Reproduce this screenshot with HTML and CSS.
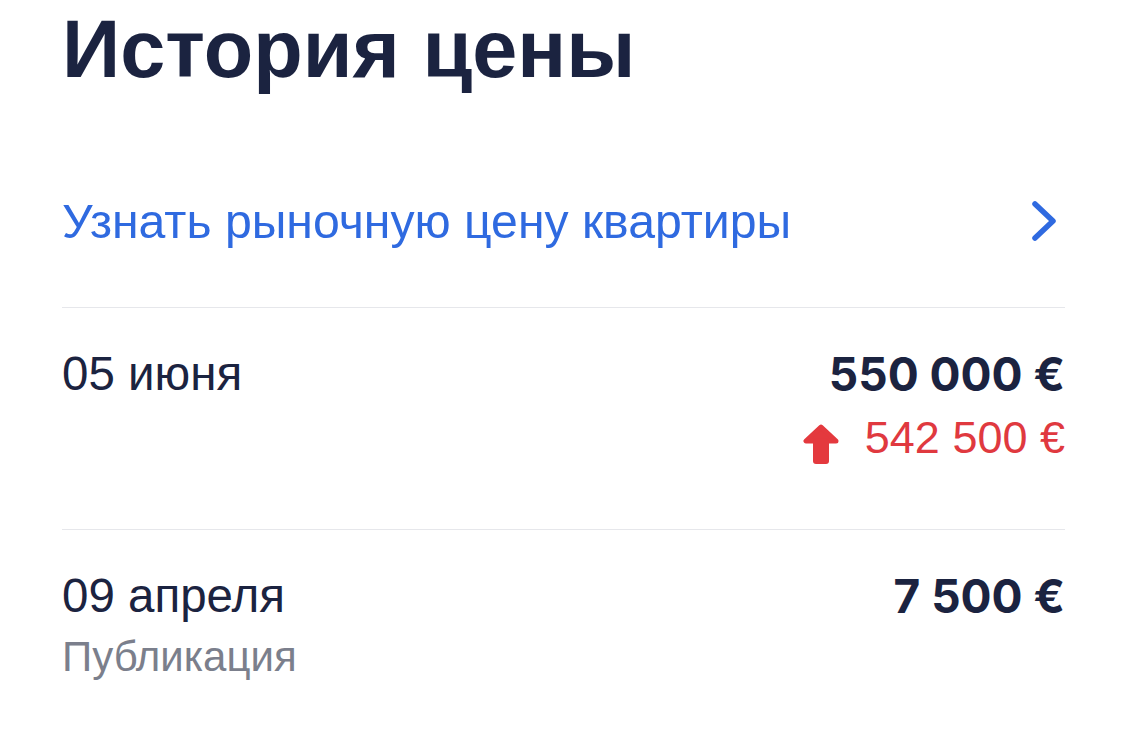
FILE: index.html
```html
<!DOCTYPE html>
<html lang="ru">
<head>
    <meta charset="UTF-8">
    <meta name="viewport" content="width=device-width, initial-scale=1.0">
    <title>История цены</title>
    <link rel="stylesheet" href="styles.css">
</head>
<body>

<div class="container">
    <h1 class="title">История цены</h1>

    <a class="market-link" href="#">
        <span>Узнать рыночную цену квартиры</span>
        <svg class="chevron" width="30" height="44" viewBox="0 0 30 44">
            <path d="M5 5 L23 22 L5 39" fill="none" stroke="#2f6ae0" stroke-width="5.5" stroke-linecap="round" stroke-linejoin="round"/>
        </svg>
    </a>

    <div class="history-row">
        <div class="date-col">
            <div class="date">05 июня</div>
        </div>
        <div class="price-col">
            <div class="price">550 000 €</div>
            <div class="old-price">
                <svg class="arrow" width="36" height="40" viewBox="0 0 36 40">
                    <path d="M18 3 L3 17 L33 17 Z" fill="#e4393e" stroke="#e4393e" stroke-width="5" stroke-linejoin="round"/>
                    <rect x="10" y="15" width="16" height="25" rx="3" fill="#e4393e"/>
                </svg>
                <span>542 500 €</span>
            </div>
        </div>
    </div>

    <div class="history-row last">
        <div class="date-col">
            <div class="date">09 апреля</div>
            <div class="note">Публикация</div>
        </div>
        <div class="price-col">
            <div class="price">7 500 €</div>
        </div>
    </div>
</div>

</body>
</html>
```

FILE: styles.css
```css
body {
    margin: 0;
    background: #ffffff;
    font-family: "Liberation Sans", Arial, sans-serif;
    color: #1b2340;
}
.container {
    padding: 2px 60px 0 62px;
}
.title {
    margin: 0;
    font-size: 81px;
    line-height: 94px;
    font-weight: bold;
    color: #1b2340;
}
.market-link {
    display: flex;
    justify-content: space-between;
    align-items: center;
    padding: 97px 0 58px;
    border-bottom: 1px solid #e6e7eb;
    color: #2f6ae0;
    text-decoration: none;
    font-size: 48.2px;
    line-height: 56px;
}
.chevron {
    margin-right: 5px;
}
.history-row {
    display: flex;
    justify-content: space-between;
    padding: 38px 0 63px;
    border-bottom: 1px solid #e6e7eb;
}
.history-row.last {
    border-bottom: none;
}
.date {
    font-size: 47.5px;
    line-height: 56px;
}
.note {
    margin-top: 5px;
    font-size: 42px;
    line-height: 56px;
    color: #7b7f8c;
}
.price-col {
    display: flex;
    flex-direction: column;
    align-items: flex-end;
}
.price {
    font-family: Inter, "Liberation Sans", sans-serif;
    font-size: 46px;
    line-height: 56px;
    font-weight: 700;
}
.old-price {
    display: flex;
    align-items: center;
    gap: 26px;
    margin-top: 8px;
    font-size: 45px;
    line-height: 56px;
    color: #e0393f;
}
.arrow {
    margin-top: 12px;
}
```
